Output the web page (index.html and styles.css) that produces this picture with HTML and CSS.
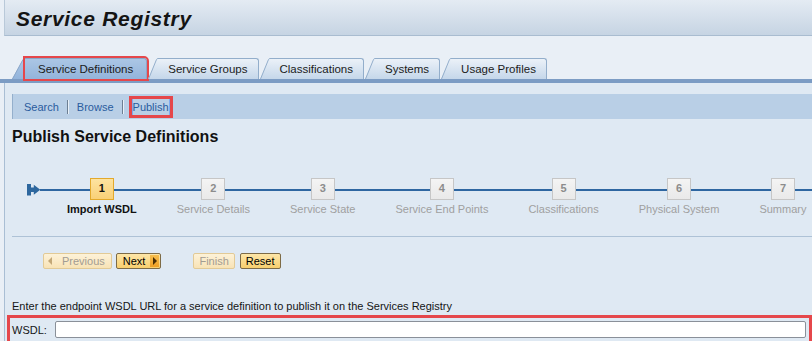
FILE: index.html
```html
<!DOCTYPE html>
<html lang="en">

<head>
    <meta charset="UTF-8">
    <meta name="viewport" content="width=device-width, initial-scale=1.0">
    <title>Service Registry</title>
    <link rel="stylesheet" href="styles.css">
</head>

<body>
    <header class="titlebar">
        <h1>Service Registry</h1>
    </header>

    <nav class="tabs">
        <div class="tab tab-selected">
            <svg class="tab-edge" width="13" height="21" viewBox="0 0 13 21">
                <defs>
                    <linearGradient id="tabFill" x1="0" y1="0" x2="0" y2="1">
                        <stop offset="0" stop-color="#ebf1f8"/>
                        <stop offset="1" stop-color="#c5d7ea"/>
                    </linearGradient>
                    <linearGradient id="tabSelFill" x1="0" y1="0" x2="0" y2="1">
                        <stop offset="0" stop-color="#abc6e5"/>
                        <stop offset="1" stop-color="#93b4db"/>
                    </linearGradient>
                </defs>
                <path d="M0 21L11 1.5Q11.8 0.5 13 0.5V21Z" fill="url(#tabSelFill)"/>
                <path d="M0.5 21L11 1.5Q11.8 0.5 13 0.5" fill="none" stroke="#8aa6c8"/>
            </svg>
            <span class="tab-label">Service Definitions</span>
        </div>
        <div class="tab">
            <svg class="tab-edge" width="10" height="21" viewBox="0 0 10 21">
                <path d="M0 21L8.5 1.5Q9 0.5 10 0.5V21Z" fill="url(#tabFill)"/>
                <path d="M0.5 21L8.5 1.5Q9 0.5 10 0.5" fill="none" stroke="#93aecb"/>
            </svg>
            <span class="tab-label">Service Groups</span>
        </div>
        <div class="tab">
            <svg class="tab-edge" width="10" height="21" viewBox="0 0 10 21">
                <path d="M0 21L8.5 1.5Q9 0.5 10 0.5V21Z" fill="url(#tabFill)"/>
                <path d="M0.5 21L8.5 1.5Q9 0.5 10 0.5" fill="none" stroke="#93aecb"/>
            </svg>
            <span class="tab-label">Classifications</span>
        </div>
        <div class="tab">
            <svg class="tab-edge" width="10" height="21" viewBox="0 0 10 21">
                <path d="M0 21L8.5 1.5Q9 0.5 10 0.5V21Z" fill="url(#tabFill)"/>
                <path d="M0.5 21L8.5 1.5Q9 0.5 10 0.5" fill="none" stroke="#93aecb"/>
            </svg>
            <span class="tab-label">Systems</span>
        </div>
        <div class="tab">
            <svg class="tab-edge" width="10" height="21" viewBox="0 0 10 21">
                <path d="M0 21L8.5 1.5Q9 0.5 10 0.5V21Z" fill="url(#tabFill)"/>
                <path d="M0.5 21L8.5 1.5Q9 0.5 10 0.5" fill="none" stroke="#93aecb"/>
            </svg>
            <span class="tab-label">Usage Profiles</span>
        </div>
    </nav>

    <main class="content">
        <div class="subnav">
            <a class="subnav-link">Search</a>
            <span class="subnav-sep"></span>
            <a class="subnav-link">Browse</a>
            <span class="subnav-sep"></span>
            <a class="subnav-link subnav-active">Publish</a>
        </div>

        <h2 class="page-title">Publish Service Definitions</h2>

        <div class="roadmap">
            <svg class="roadmap-start" width="14" height="12" viewBox="0 0 14 12">
                <rect x="0" y="0" width="4" height="11.5" fill="#2d679e"/>
                <path d="M4 3.6H6.8V0.8L13.3 5.75L6.8 10.7V7.9H4Z" fill="#2d679e"/>
            </svg>
            <div class="steps">
                <div class="step step-current">
                    <div class="step-box">1</div>
                    <div class="step-label">Import WSDL</div>
                </div>
                <div class="step">
                    <div class="step-box">2</div>
                    <div class="step-label">Service Details</div>
                </div>
                <div class="step">
                    <div class="step-box">3</div>
                    <div class="step-label">Service State</div>
                </div>
                <div class="step">
                    <div class="step-box">4</div>
                    <div class="step-label">Service End Points</div>
                </div>
                <div class="step">
                    <div class="step-box">5</div>
                    <div class="step-label">Classifications</div>
                </div>
                <div class="step">
                    <div class="step-box">6</div>
                    <div class="step-label">Physical System</div>
                </div>
                <div class="step">
                    <div class="step-box">7</div>
                    <div class="step-label">Summary</div>
                </div>
            </div>
        </div>

        <div class="divider"></div>

        <div class="actions">
            <div class="btn-group">
                <button class="btn btn-disabled btn-prev"><span class="arrow-left"></span>Previous</button>
                <button class="btn btn-next">Next<span class="btn-arrow"><span class="arrow-right"></span></span></button>
            </div>
            <div class="btn-group">
                <button class="btn btn-disabled">Finish</button>
                <button class="btn">Reset</button>
            </div>
        </div>

        <p class="hint">Enter the endpoint WSDL URL for a service definition to publish it on the Services Registry</p>

        <div class="wsdl-row">
            <label class="wsdl-label" for="wsdlUrl">WSDL:</label>
            <input type="text" id="wsdlUrl" class="wsdl-input">
        </div>
    </main>
</body>

</html>
```

FILE: styles.css
```css
* {
    box-sizing: border-box;
}

body {
    margin: 0;
    font-family: 'Liberation Sans', Arial, sans-serif;
    background-color: #e9eff6;
    color: #111;
    overflow: hidden;
    height: 341px;
}

/* title bar */
.titlebar {
    height: 36px;
    margin-left: 4px;
    padding: 3px 0 0 11px;
    display: flex;
    align-items: center;
    border-left: 1px solid #b9c9d9;
    border-bottom: 1px solid #a9bcd0;
    background: linear-gradient(#e4ebf3, #c6d4e3);
}

.titlebar h1 {
    margin: 0;
    font-size: 21px;
    font-style: italic;
    font-weight: bold;
    letter-spacing: 0.7px;
    color: #141414;
}

/* tab strip */
.tabs {
    height: 47px;
    display: flex;
    align-items: flex-end;
    padding-left: 12px;
    border-bottom: 4px solid #7c9cc4;
}

.tab {
    display: flex;
    height: 21px;
    margin-right: 1px;
}

.tab-edge {
    display: block;
    flex-shrink: 0;
}

.tab-label {
    display: flex;
    align-items: center;
    padding: 0 10px;
    font-size: 11.5px;
    color: #1b1b1b;
    border-top: 1px solid #93aecb;
    border-right: 1px solid #93aecb;
    border-radius: 0 3px 0 0;
    background: linear-gradient(#ebf1f8, #c5d7ea);
}

.tab-selected .tab-label {
    padding: 0 13px;
    border-color: #8aa6c8;
    background: linear-gradient(#abc6e5, #93b4db);
    outline: 2px solid #e5474b;
    outline-offset: 0;
}

/* content */
.content {
    height: 258px;
    margin-left: 4px;
    padding: 11px 0 0 7px;
    border-left: 1px solid #a9bed4;
    background-color: #dfe9f3;
}

.subnav {
    height: 25px;
    display: flex;
    align-items: center;
    padding-left: 11px;
    border-left: 1px solid #94afcc;
    background-color: #b9cfe6;
}

.subnav-link {
    font-size: 11px;
    line-height: 16px;
    color: #2a5c9e;
}

.subnav-sep {
    width: 2px;
    height: 14px;
    margin: 0 8px;
    border-left: 1px solid #6d7f93;
    border-right: 1px solid #e8f0f8;
}

.subnav-active {
    padding: 0;
    border-left: 1px solid #7eaaf0;
    border-right: 1px solid #7eaaf0;
    outline: 3px solid #e5474b;
}

.page-title {
    margin: 8px 0 0;
    font-size: 16px;
    line-height: 20px;
    font-weight: bold;
    color: #111;
}

/* roadmap */
.roadmap {
    display: flex;
    align-items: flex-start;
    margin-top: 31px;
    padding-left: 15px;
    background: linear-gradient(#2e66a1, #2e66a1) no-repeat 28px 11px / calc(100% - 28px) 2px;
}

.roadmap-start {
    margin-top: 6px;
    flex-shrink: 0;
}

.steps {
    display: flex;
    gap: 40px;
    margin-left: 26px;
}

.step {
    display: flex;
    flex-direction: column;
    align-items: center;
    flex-shrink: 0;
}

.step-box {
    width: 24px;
    height: 22px;
    font-size: 11px;
    font-weight: bold;
    line-height: 18px;
    text-align: center;
    color: #8c8c8c;
    border: 1px solid #c6c6c6;
    background: linear-gradient(#f4f4f4, #e9e9e9);
}

.step-label {
    margin-top: 2px;
    font-size: 11px;
    line-height: 14px;
    white-space: nowrap;
    color: #a0a0a0;
}

.step-current .step-box {
    color: #111;
    border-color: #e3a92c;
    background: linear-gradient(#fde3a0, #f9d077);
}

.step-current .step-label {
    color: #111;
    font-weight: bold;
}

.divider {
    margin-top: 20px;
    height: 1px;
    background-color: #aec2d6;
}

/* buttons */
.actions {
    display: flex;
    gap: 32px;
    margin-top: 16px;
    padding-left: 31px;
}

.btn-group {
    display: flex;
    gap: 5px;
}

.btn-group:first-child {
    gap: 4px;
}

.btn {
    display: flex;
    align-items: center;
    height: 16px;
    margin: 0;
    padding: 0 5px;
    font-family: 'Liberation Sans', Arial, sans-serif;
    font-size: 11px;
    line-height: 14px;
    color: #000;
    border: 1px solid #7d6b46;
    border-radius: 2px;
    background: linear-gradient(#fde6a8, #f8cf6e);
}

.btn-disabled {
    color: #a29c92;
    border-color: #e2ca96;
    background: linear-gradient(#fdf2d8, #f8e3b6);
}

.btn-prev {
    padding: 0 6px 0 4px;
}

.btn-next {
    padding: 0 1px 0 6px;
}

.arrow-left {
    width: 0;
    height: 0;
    margin-right: 10px;
    border-top: 4px solid transparent;
    border-bottom: 4px solid transparent;
    border-right: 4px solid #c3a877;
}

.btn-arrow {
    display: flex;
    align-items: center;
    justify-content: center;
    width: 9px;
    height: 12px;
    margin-left: 5px;
    background: linear-gradient(#f7be4e, #ee9f25);
}

.arrow-right {
    width: 0;
    height: 0;
    border-top: 4px solid transparent;
    border-bottom: 4px solid transparent;
    border-left: 4px solid #4a2f05;
}

/* WSDL input */
.hint {
    margin: 30px 0 0;
    font-size: 11px;
    line-height: 14px;
    color: #151515;
}

.wsdl-row {
    display: flex;
    align-items: center;
    margin: 2px 0 0 -5px;
    padding: 3px 3px 3px 2px;
    border: 3px solid #e5474b;
}

.wsdl-label {
    margin-right: 8px;
    font-size: 11px;
    color: #151515;
}

.wsdl-input {
    flex: 1;
    height: 17px;
    padding: 0 3px;
    border: 1px solid #8a9099;
    border-radius: 2px;
    background-color: #fff;
    outline: none;
}
```
